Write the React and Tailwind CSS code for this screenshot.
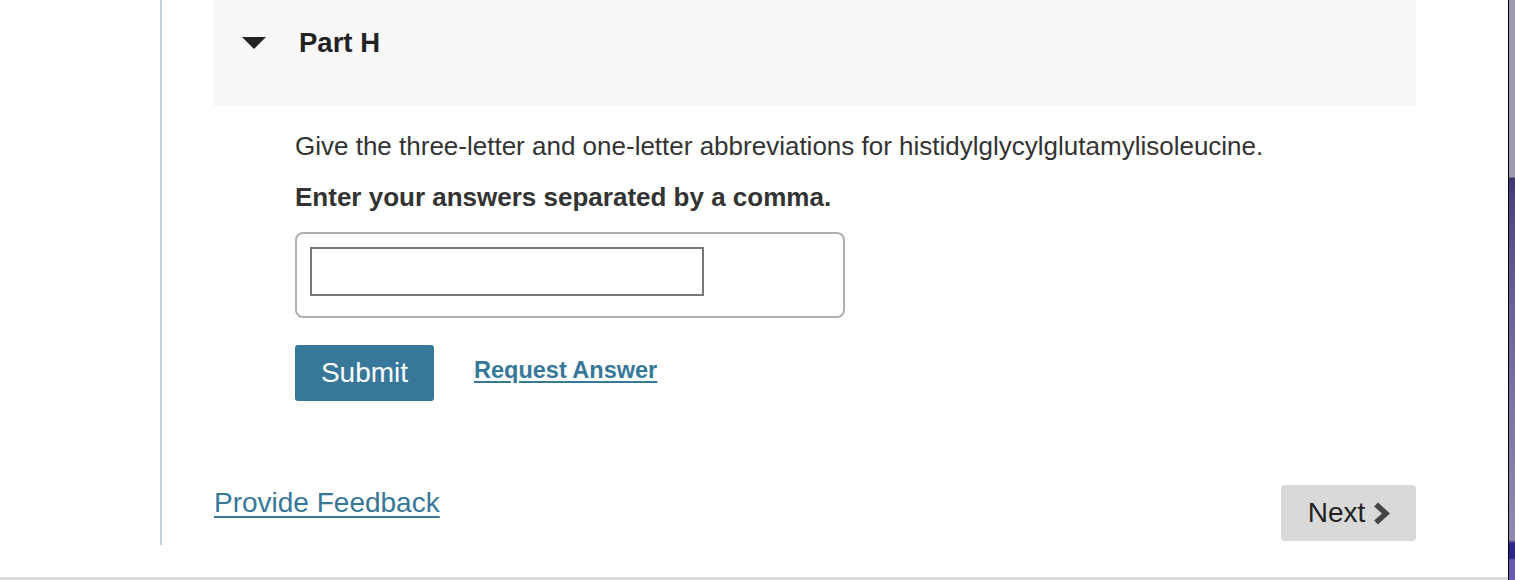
import React from "react";

export default function App() {
  const font = { fontFamily: '"Liberation Sans", Arial, Helvetica, sans-serif' };
  return (
    <div className="flex h-[580px] w-[1515px] overflow-hidden bg-white" style={font}>
      <div className="flex w-[1508px] flex-col border-b-[3px] border-[#dcdcdc]">
        <div className="ml-[160px] flex h-[545px] flex-col border-l-2 border-[#c4cfdd] pl-[52px] pr-[92px]">
          <div className="flex h-[107px] shrink-0 items-center bg-[#f8f8f8] pl-[28px] pb-[22px] pt-0">
            <svg width="24" height="12" viewBox="0 0 24 12" className="mr-[33px]">
              <polygon points="0,0 24,0 12,12" fill="#222" />
            </svg>
            <span className="text-[27.5px] font-bold leading-none text-[#222]">Part H</span>
          </div>
          <div className="flex flex-col pl-[81px]">
            <p className="mt-[24px] text-[26px] leading-[30px] text-[#333]">
              Give the three-letter and one-letter abbreviations for histidylglycylglutamylisoleucine.
            </p>
            <p className="mt-[21px] text-[26px] font-bold leading-[30px] text-[#333]">
              Enter your answers separated by a comma.
            </p>
            <div className="mt-[20px] h-[86px] w-[550px] rounded-[8px] border-2 border-[#b0b0b0] p-[13px]">
              <div className="h-[49px] w-[394px] border-2 border-[#767676] bg-white" />
            </div>
            <div className="mt-[27px] flex items-center">
              <button className="flex h-[56px] w-[139px] items-center justify-center rounded-[3px] bg-[#37789a] text-[28px] text-white">
                Submit
              </button>
              <a className="ml-[40px] mb-[4px] text-[23.5px] font-bold text-[#37789a] underline underline-offset-[3px]">
                Request Answer
              </a>
            </div>
          </div>
          <div className="mt-auto mb-[4px] flex items-center justify-between">
            <a className="mb-[20px] text-[28px] leading-none text-[#37789a] underline underline-offset-[4px]">
              Provide Feedback
            </a>
            <button className="flex h-[56px] w-[135px] items-center justify-center gap-[8px] rounded-[4px] bg-[#d9d9d9] pl-[1px] text-[28px] text-[#222]">
              Next
              <svg width="17" height="25" viewBox="0 0 17 25">
                <polyline points="3,3.5 13,12.5 3,21.5" fill="none" stroke="#444" strokeWidth="5.5" strokeLinejoin="miter" strokeLinecap="butt" />
              </svg>
            </button>
          </div>
        </div>
      </div>
      <div className="w-px bg-black" />
      <div
        className="flex-1"
        style={{
          background:
            "linear-gradient(to bottom, #9c9bb2 0px, #9c9bb2 177px, #3b356c 178px, #4a4282 195px, #6a5f98 300px, #7f77a3 420px, #918aae 540px, #2b268c 543px, #2b268c 558px, #6a5ab0 560px, #6a5ab0 580px)",
        }}
      />
    </div>
  );
}
